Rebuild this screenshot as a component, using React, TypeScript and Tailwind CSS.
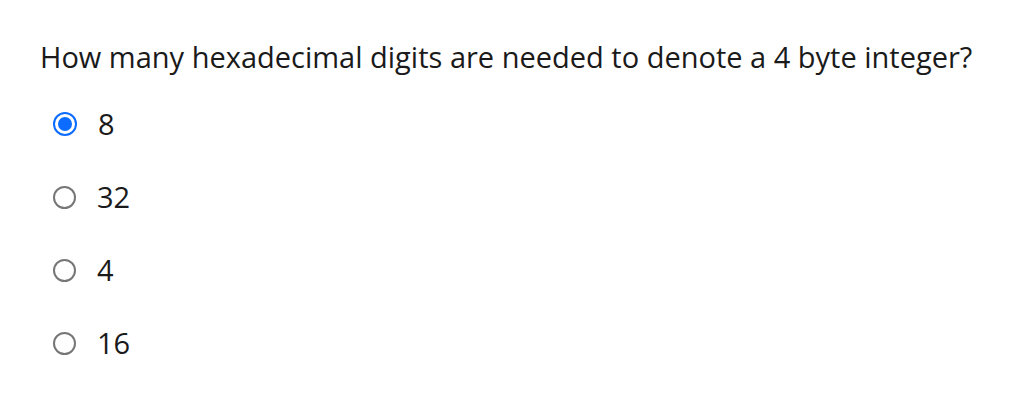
import { useState } from "react";

const OPTIONS = ["8", "32", "4", "16"];

export default function App() {
  const [picked, setPicked] = useState("8");

  return (
    <div className="min-h-[414px] bg-white px-[40px] pt-[36px] text-[#1a1a1a]" style={{ fontFamily: '"Open Sans", sans-serif' }}>
      <div className="text-[29px] leading-[42px]">How many hexadecimal digits are needed to denote a 4 byte integer?</div>
      <div className="mt-[33px] flex flex-col gap-[47px]">
        {OPTIONS.map((o) => (
          <label key={o} className="flex h-[26px] cursor-pointer items-center gap-[21px] pl-[13px] text-[29px]" onClick={() => setPicked(o)}>
            {picked === o ? (
              <span className="flex h-[24px] w-[24px] items-center justify-center rounded-full border-[2.5px] border-[#0b6cff]">
                <span className="h-[14px] w-[14px] rounded-full bg-[#0b6cff]" />
              </span>
            ) : (
              <span className="h-[23px] w-[23px] rounded-full border-[2.5px] border-[#767676]" />
            )}
            <span>{o}</span>
          </label>
        ))}
      </div>
    </div>
  );
}
